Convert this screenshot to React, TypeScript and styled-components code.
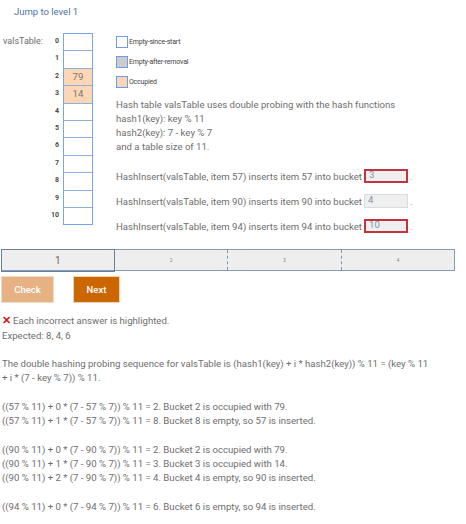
import React from 'react';
import styled, { createGlobalStyle } from 'styled-components';

const GlobalStyle = createGlobalStyle`
  body {
    margin: 0;
    background: #ffffff;
    font-family: Roboto, 'Liberation Sans', sans-serif;
    color: #6e6e6e;
  }
`;

const Page = styled.div`
  width: 466px;
  padding: 0 11px 0 1px;
  box-sizing: border-box;
  font-size: 10px;
`;

const JumpLink = styled.div`
  padding: 6px 0 0 13px;
  height: 28px;
  box-sizing: border-box;
  font-size: 9.5px;
  color: #4a74a3;
`;

const Main = styled.div`
  display: flex;
  align-items: flex-start;
  margin-top: 5px;
`;

const TableBlock = styled.div`
  display: flex;
  align-items: flex-start;
`;

const TableLabel = styled.div`
  width: 46px;
  padding: 3px 0 0 2px;
  font-size: 9px;
  color: #6e6e6e;
`;

const IndexCol = styled.div`
  display: flex;
  flex-direction: column;
  width: 14px;
`;

const Index = styled.div`
  height: 17.4px;
  line-height: 17.4px;
  font-size: 7px;
  font-weight: 700;
  color: #4a4a4a;
  text-align: right;
  padding-right: 4px;
`;

const Cells = styled.div`
  display: flex;
  flex-direction: column;
  border: 1.5px solid #78a6ee;
  width: 28px;
`;

const Cell = styled.div<{ $filled?: boolean }>`
  height: 16.4px;
  line-height: 16.4px;
  border-bottom: 1px solid #8fb0df;
  background: ${p => (p.$filled ? '#fcd6b5' : '#ffffff')};
  text-align: center;
  font-size: 9.6px;
  color: #777;
  &:last-child {
    border-bottom: none;
  }
`;

const Right = styled.div`
  display: flex;
  flex-direction: column;
  margin-left: 23px;
  margin-top: -1px;
`;

const LegendRow = styled.div`
  display: flex;
  align-items: center;
  height: 20px;
`;

const Swatch = styled.div<{ $bg: string }>`
  width: 10px;
  height: 10px;
  border: 1.5px solid #6d9be6;
  background: ${p => p.$bg};
  margin-right: 1px;
`;

const LegendText = styled.span`
  font-size: 7px;
  letter-spacing: -0.2px;
  color: #444;
`;

const Desc = styled.div`
  margin-top: 6px;
  line-height: 14px;
  font-size: 9.6px;
`;

const Inserts = styled.div`
  margin-top: 15px;
  display: flex;
  flex-direction: column;
  gap: 11px;
`;

const InsertRow = styled.div`
  display: flex;
  align-items: center;
  font-size: 9.6px;
  height: 14px;
`;

const AnswerBox = styled.div<{ $wrong?: boolean }>`
  width: 44px;
  height: 14px;
  box-sizing: border-box;
  margin-left: 2px;
  border: ${p => (p.$wrong ? '2px solid #c2343b' : '1px solid #d7dcdf')};
  background: #efefef;
  font-size: 9.6px;
  color: #8193a8;
  padding: 0 3px;
  line-height: ${p => (p.$wrong ? '12px' : '14px')};
  display: flex;
  align-items: flex-end;
`;

const Period = styled.span`
  margin-left: 2px;
  color: #888;
`;

const Progress = styled.div`
  display: flex;
  margin-top: 16px;
  height: 22px;
  border: 1.5px solid #849cb8;
  background: #eeeeee;
  box-sizing: border-box;
`;

const Segment = styled.div<{ $active?: boolean; $dashed?: boolean }>`
  flex: 1;
  display: flex;
  align-items: center;
  justify-content: center;
  font-size: ${p => (p.$active ? '10px' : '5px')};
  color: ${p => (p.$active ? '#666' : '#888')};
  border: ${p => (p.$active ? '1.5px solid #6a7f9b' : 'none')};
  margin: ${p => (p.$active ? '-1.5px 0 -1.5px -1.5px' : '0')};
  border-left: ${p => (p.$dashed ? '1.5px dashed #7f97b3' : undefined)};
`;

const Buttons = styled.div`
  display: flex;
  gap: 19px;
  margin-top: 5px;
`;

const Button = styled.button<{ $primary?: boolean }>`
  margin: 0;
  width: ${p => (p.$primary ? '47px' : '53px')};
  height: 27px;
  border: 1px solid ${p => (p.$primary ? '#f2d3b8' : '#f3dcc7')};
  background: ${p => (p.$primary ? '#cc6600' : '#e7b283')};
  color: #ffffff;
  font-family: Roboto, 'Liberation Sans', sans-serif;
  font-size: 9.5px;
  font-weight: 500;
  padding: 0;
`;

const Feedback = styled.div`
  margin-top: 10px;
  font-size: 9.6px;
  line-height: 15px;
  padding-left: 1px;
`;

const Cross = styled.span`
  color: #d01c1c;
  font-weight: 700;
  font-size: 11px;
  margin-right: 2px;
`;

const Para = styled.div`
  margin-top: 14px;
  line-height: 14.4px;
`;

const legend = [
  { bg: '#ffffff', label: 'Empty-since-start' },
  { bg: '#cccccc', label: 'Empty-after-removal' },
  { bg: '#fcd6b5', label: 'Occupied' },
];

const table: (number | null)[] = [null, null, 79, 14, null, null, null, null, null, null, null];

const inserts = [
  { item: 57, answer: '3', wrong: true },
  { item: 90, answer: '4', wrong: false },
  { item: 94, answer: '10', wrong: true },
];

const App: React.FC = () => {
  return (
    <>
      <GlobalStyle />
      <Page>
        <JumpLink>Jump to level 1</JumpLink>
        <Main>
          <TableBlock>
            <TableLabel>valsTable:</TableLabel>
            <IndexCol>
              {table.map((_, i) => (
                <Index key={i}>{i}</Index>
              ))}
            </IndexCol>
            <Cells>
              {table.map((v, i) => (
                <Cell key={i} $filled={v !== null}>
                  {v ?? ''}
                </Cell>
              ))}
            </Cells>
          </TableBlock>
          <Right>
            {legend.map(l => (
              <LegendRow key={l.label}>
                <Swatch $bg={l.bg} />
                <LegendText>{l.label}</LegendText>
              </LegendRow>
            ))}
            <Desc>
              Hash table valsTable uses double probing with the hash functions
              <br />
              hash1(key): key % 11
              <br />
              hash2(key): 7 - key % 7
              <br />
              and a table size of 11.
            </Desc>
            <Inserts>
              {inserts.map(r => (
                <InsertRow key={r.item}>
                  HashInsert(valsTable, item {r.item}) inserts item {r.item} into bucket
                  <AnswerBox $wrong={r.wrong}>{r.answer}</AnswerBox>
                  <Period>.</Period>
                </InsertRow>
              ))}
            </Inserts>
          </Right>
        </Main>
        <Progress>
          <Segment $active>1</Segment>
          <Segment>2</Segment>
          <Segment $dashed>3</Segment>
          <Segment $dashed>4</Segment>
        </Progress>
        <Buttons>
          <Button>Check</Button>
          <Button $primary>Next</Button>
        </Buttons>
        <Feedback>
          <div>
            <Cross>✕</Cross>Each incorrect answer is highlighted.
          </div>
          <div>Expected: 8, 4, 6</div>
          <Para>
            The double hashing probing sequence for valsTable is (hash1(key) + i * hash2(key)) % 11 = (key % 11
            <br />+ i * (7 - key % 7)) % 11.
          </Para>
          <Para>
            <div>((57 % 11) + 0 * (7 - 57 % 7)) % 11 = 2. Bucket 2 is occupied with 79.</div>
            <div>((57 % 11) + 1 * (7 - 57 % 7)) % 11 = 8. Bucket 8 is empty, so 57 is inserted.</div>
          </Para>
          <Para>
            <div>((90 % 11) + 0 * (7 - 90 % 7)) % 11 = 2. Bucket 2 is occupied with 79.</div>
            <div>((90 % 11) + 1 * (7 - 90 % 7)) % 11 = 3. Bucket 3 is occupied with 14.</div>
            <div>((90 % 11) + 2 * (7 - 90 % 7)) % 11 = 4. Bucket 4 is empty, so 90 is inserted.</div>
          </Para>
          <Para>
            <div>((94 % 11) + 0 * (7 - 94 % 7)) % 11 = 6. Bucket 6 is empty, so 94 is inserted.</div>
          </Para>
        </Feedback>
      </Page>
    </>
  );
};

export default App;
